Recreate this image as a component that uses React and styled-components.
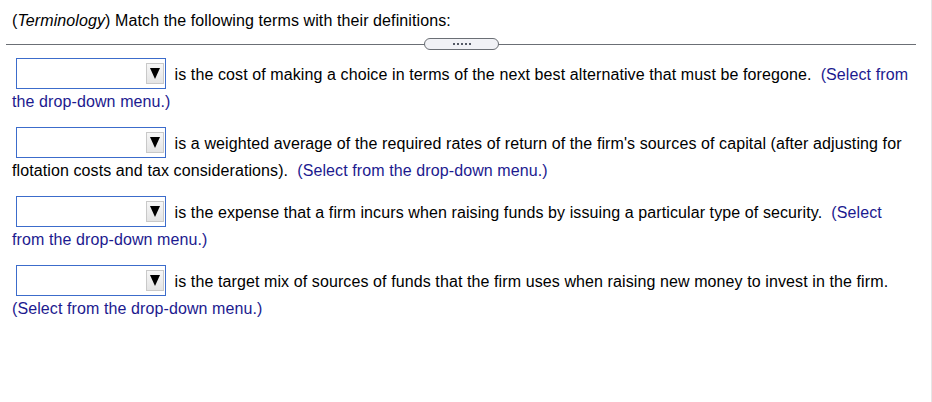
import React from 'react';
import styled, { createGlobalStyle } from 'styled-components';

const GlobalStyle = createGlobalStyle`
    body {
        margin: 0;
        background: #fff;
        font-family: Arial, "Liberation Sans", sans-serif;
        font-size: 16px;
        letter-spacing: 0.1px;
        color: #000;
    }
`

const Page = styled.div`
    width: 932px;
    height: 402px;
    box-sizing: border-box;
    border-right: 1px solid #e6e6e6;
    padding-top: 11px;
`

const Title = styled.div`
    padding-left: 12px;
    line-height: 19px;
    em { font-style: italic; }
`

const DividerRow = styled.div`
    position: relative;
    margin: 14px 15px 0 6px;
    height: 1px;
    background: #6b6f75;
`

const Pill = styled.div`
    position: absolute;
    left: 418px;
    top: -6px;
    width: 75px;
    height: 12px;
    box-sizing: border-box;
    border: 1px solid #6b6f75;
    border-radius: 6px;
    background: #f1f2f6;
    display: flex;
    justify-content: center;
    align-items: center;
    gap: 2px;
    span {
        width: 2px;
        height: 2px;
        background: #555a66;
    }
`

const Questions = styled.div`
    padding: 15px 15px 0 12px;
    display: flex;
    flex-direction: column;
    gap: 16px;
`

const Item = styled.p`
    margin: 0;
    line-height: 22px;
`

const Select = styled.span`
    display: inline-flex;
    justify-content: flex-end;
    align-items: center;
    vertical-align: middle;
    width: 150px;
    height: 31px;
    box-sizing: border-box;
    margin: 0 4px 0 4px;
    padding-right: 1px;
    border: 1px solid #3c6ccb;
    background: #fff;
    transform: translateY(-2px);
`

const Arrow = styled.span`
    width: 18px;
    height: 21px;
    box-sizing: border-box;
    border: 1px solid #c9c9c9;
    background: linear-gradient(#f7f7f7, #e4e4e4);
    display: flex;
    align-items: center;
    justify-content: center;
    &::after {
        content: '';
        border-left: 5px solid transparent;
        border-right: 5px solid transparent;
        border-top: 11px solid #000;
    }
`

const Hint = styled.span`
    color: #1c1a8f;
`

const items = [
    "is the cost of making a choice in terms of the next best alternative that must be foregone.",
    "is a weighted average of the required rates of return of the firm's sources of capital (after adjusting for flotation costs and tax considerations).",
    "is the expense that a firm incurs when raising funds by issuing a particular type of security.",
    "is the target mix of sources of funds that the firm uses when raising new money to invest in the firm.",
]

const App = () => {
    return (
        <>
            <GlobalStyle />
            <Page>
                <Title>(<em>Terminology</em>) Match the following terms with their definitions:</Title>
                <DividerRow>
                    <Pill><span /><span /><span /><span /><span /></Pill>
                </DividerRow>
                <Questions>
                    {items.map((t, i) => (
                        <Item key={i}>
                            <Select><Arrow /></Select> {t}&nbsp; <Hint>(Select from the drop-down menu.)</Hint>
                        </Item>
                    ))}
                </Questions>
            </Page>
        </>
    );
};

export default App;
